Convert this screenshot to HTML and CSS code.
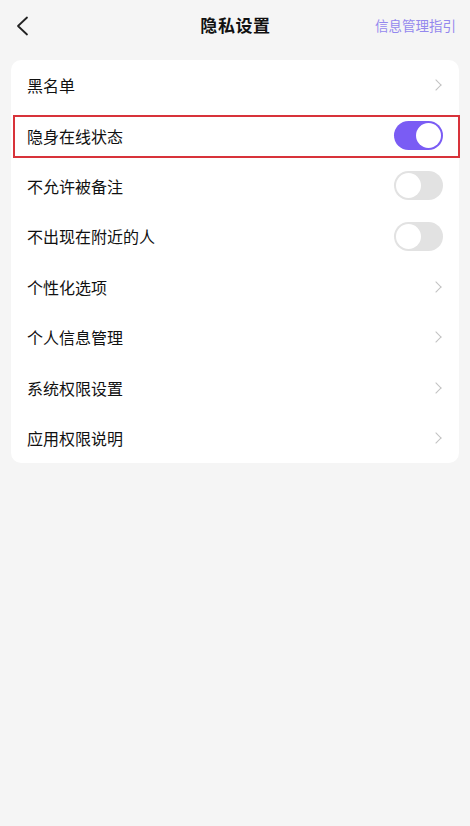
FILE: index.html
```html
<!DOCTYPE html>
<html lang="zh-CN">
<head>
    <meta charset="UTF-8">
    <meta name="viewport" content="width=device-width, initial-scale=1.0">
    <title>隐私设置</title>
    <link rel="stylesheet" href="styles.css">
</head>
<body>
    <!-- Top bar -->
    <header class="topbar">
        <a class="back" href="#">
            <svg width="14" height="20" viewBox="0 0 14 20"><path d="M12 1.5 L3 10 L12 18.5" fill="none" stroke="#222" stroke-width="1.8" stroke-linecap="round" stroke-linejoin="round"/></svg>
        </a>
        <h1>隐私设置</h1>
        <a class="guide" href="#">信息管理指引</a>
    </header>

    <!-- Settings list -->
    <div class="card">
        <div class="row">
            <span>黑名单</span>
            <span class="arrow"></span>
        </div>
        <div class="row marked">
            <span>隐身在线状态</span>
            <span class="switch on"></span>
        </div>
        <div class="row">
            <span>不允许被备注</span>
            <span class="switch"></span>
        </div>
        <div class="row">
            <span>不出现在附近的人</span>
            <span class="switch"></span>
        </div>
        <div class="row">
            <span>个性化选项</span>
            <span class="arrow"></span>
        </div>
        <div class="row">
            <span>个人信息管理</span>
            <span class="arrow"></span>
        </div>
        <div class="row">
            <span>系统权限设置</span>
            <span class="arrow"></span>
        </div>
        <div class="row">
            <span>应用权限说明</span>
            <span class="arrow"></span>
        </div>
    </div>
</body>
</html>
```

FILE: styles.css
```css
/* Reset */
body, h1 {
    margin: 0;
    padding: 0;
}

body {
    font-family: "Noto Sans CJK SC", "Noto Sans", sans-serif;
    background-color: #f5f5f5;
    color: #111;
    height: 826px;
}

/* Top bar */
.topbar {
    height: 49px;
    display: grid;
    grid-template-columns: 1fr auto 1fr;
    align-items: center;
    padding: 0 14px 3px 15px;
}

.back {
    display: flex;
    align-items: center;
    padding-top: 3px;
}

.topbar h1 {
    font-size: 17px;
    font-weight: bold;
    color: #111;
    letter-spacing: 0.6px;
}

.guide {
    justify-self: end;
    font-size: 13.5px;
    color: #9488ee;
    text-decoration: none;
}

/* List card */
.card {
    margin: 8px 11px 0;
    background-color: #ffffff;
    border-radius: 10px;
}

.row {
    position: relative;
    height: 50.4px;
    display: flex;
    align-items: center;
    justify-content: space-between;
    padding: 0 16px;
    font-size: 16px;
}

/* red highlight frame drawn over the row */
.row.marked::after {
    content: "";
    position: absolute;
    top: 5px;
    bottom: 3px;
    left: 2px;
    right: -1px;
    border: 2px solid #d8333a;
}

.arrow {
    width: 7px;
    height: 7px;
    margin-right: 3px;
    border-top: 1.5px solid #c2c2c2;
    border-right: 1.5px solid #c2c2c2;
    transform: rotate(45deg);
}

.switch {
    position: relative;
    width: 49px;
    height: 29px;
    border-radius: 15px;
    background-color: #e2e2e2;
}

.switch::before {
    content: "";
    position: absolute;
    top: 2px;
    left: 2px;
    width: 25px;
    height: 25px;
    border-radius: 50%;
    background-color: #ffffff;
}

.switch.on {
    background-color: #7a5cf4;
}

.switch.on::before {
    left: 22px;
}
```
